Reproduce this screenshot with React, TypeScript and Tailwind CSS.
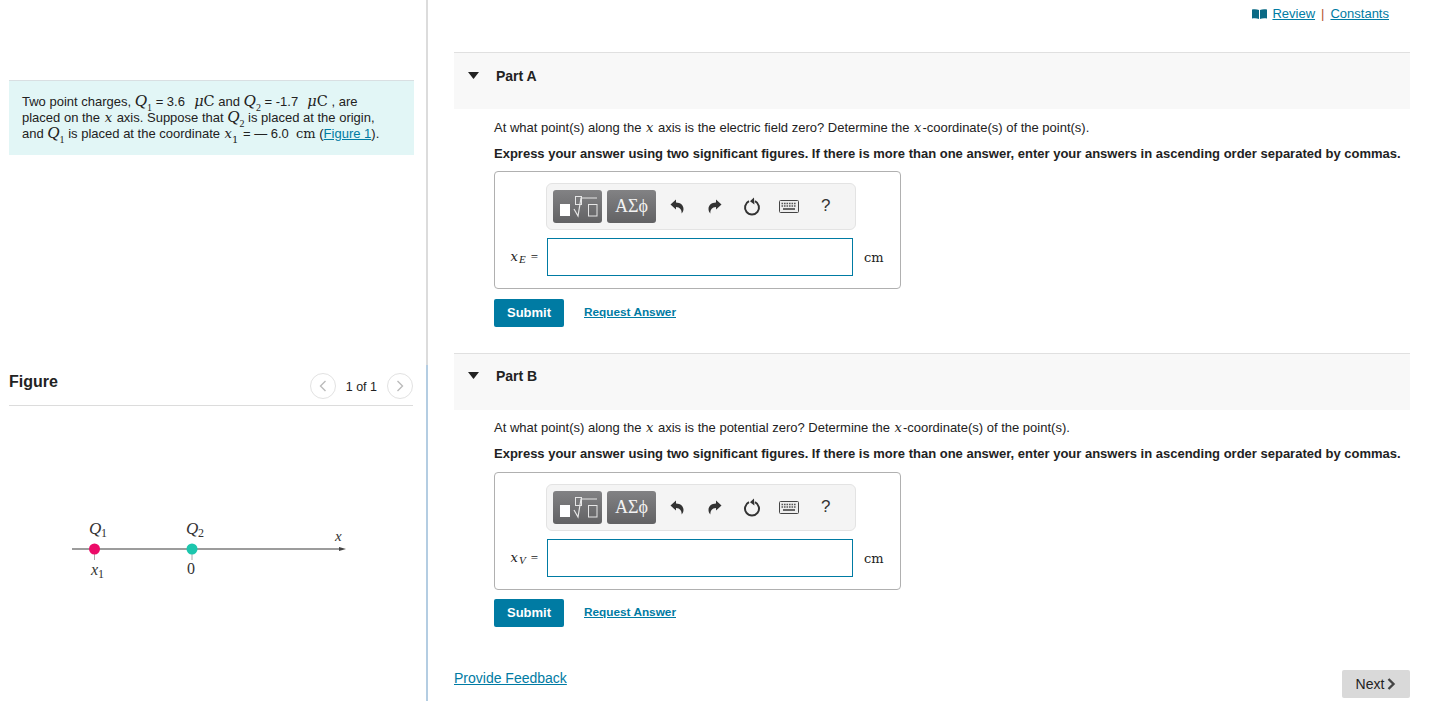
const sans = "font-['Liberation_Sans',Arial,sans-serif]";

function MathVar({ v, sub }: { v: string; sub?: string }) {
  return (
    <span className="font-['Liberation_Serif',serif] text-[17px] italic leading-[0] text-[#222]">
      {v}
      {sub && <sub className="text-[10px] not-italic leading-[0] align-[-2px]">{sub}</sub>}
    </span>
  );
}

function MathX({ sub }: { sub?: string }) {
  return (
    <span className="mx-[1px] font-['DejaVu_Serif',serif] text-[13px] italic leading-[0] text-[#222]">
      x
      {sub && <sub className="text-[10px] not-italic leading-[0] align-[-2px]">{sub}</sub>}
    </span>
  );
}

function Unit({ children }: { children: string }) {
  return <span className="font-['DejaVu_Serif',serif] text-[13px] leading-[0] text-[#222]">{children}</span>;
}

function MicroCoulomb() {
  return (
    <span className="ml-[2px] font-['DejaVu_Serif',serif] text-[14.5px] leading-[0] text-[#222]">
      <i>μ</i>C
    </span>
  );
}

function Undo({ flip }: { flip?: boolean }) {
  return (
    <svg width="14" height="15" viewBox="0 0 14 15" className={flip ? '-scale-x-100' : ''}>
      <path d="M0.5 5.5 L6 0.5 V3.6 C10.5 3.6 13.5 6.4 13.5 10 C13.5 11.8 12.8 13.4 11.6 14.5 C12 11 10 8 6 7.9 V10.6 Z" fill="#333" />
    </svg>
  );
}

function Toolbar() {
  return (
    <div className="ml-[51px] flex h-[47px] w-[310px] items-center rounded-md border border-[#e3e3e3] bg-[#f4f4f4] pb-[1px] pl-[6px]">
      <div className="h-[33px] w-[49px] rounded-[3px] bg-gradient-to-b from-[#828284] to-[#626264]">
        <svg width="49" height="33" viewBox="0 0 49 33">
          <rect x="7" y="14" width="10" height="12" fill="#fff" />
          <rect x="22.5" y="6.5" width="6" height="8" fill="none" stroke="#e6e6e6" />
          <path d="M21 19 L25 26 L28 8 H44" fill="none" stroke="#e6e6e6" strokeWidth="1.2" />
          <rect x="35.5" y="14.5" width="8.5" height="11.5" fill="none" stroke="#e6e6e6" />
        </svg>
      </div>
      <div className="ml-[5px] flex h-[33px] w-[49px] items-center justify-center rounded-[3px] bg-gradient-to-b from-[#828284] to-[#626264] font-['Liberation_Serif',serif] text-[18px] text-[#f2f2f2]">
        ΑΣϕ
      </div>
      <div className="ml-[14px] flex w-[14px] justify-center"><Undo /></div>
      <div className="ml-[24px] flex w-[14px] justify-center"><Undo flip /></div>
      <div className="ml-[21px]">
        <svg width="18" height="19" viewBox="0 0 18 19">
          <path d="M6 4.2 A7 7 0 1 0 12 4.2" fill="none" stroke="#333" strokeWidth="2" />
          <path d="M11 0.5 L7 4.2 L11.4 7.4 Z" fill="#333" />
        </svg>
      </div>
      <div className="ml-[18px]">
        <svg width="20" height="13" viewBox="0 0 20 13">
          <rect x="0.5" y="0.5" width="19" height="12" rx="1" fill="#eee" stroke="#444" />
          <path d="M2.5 3.5 H17.5 M2.5 6 H17.5" stroke="#555" strokeWidth="1.4" strokeDasharray="1.6 0.9" />
          <path d="M4 9 H16" stroke="#444" strokeWidth="1.6" />
        </svg>
      </div>
      <span className={`ml-[22px] text-[17px] text-[#333] ${sans}`}>?</span>
    </div>
  );
}

function AnswerBox({ sub }: { sub: string }) {
  return (
    <div className="h-[118px] w-[407px] rounded-[4px] border border-[#b0b0b0] bg-white pt-[11px]">
      <Toolbar />
      <div className="mt-[8px] flex h-[38px] items-center">
        <div className="flex w-[52px] items-center justify-end pr-[9px] font-['Liberation_Serif',serif] text-[#222]">
          <MathX />
          <sub className="text-[11px] italic leading-none align-[-3px]">{sub}</sub>
          <span className="ml-[5px] text-[13px]">=</span>
        </div>
        <div className="h-[38px] w-[306px] border border-[#007ba3] bg-white" />
        <div className="ml-[11px]"><Unit>cm</Unit></div>
      </div>
    </div>
  );
}

type PartProps = {
  title: string;
  question: string;
  sub: string;
  headerTop: string;
  questionTop: string;
  expressTop: string;
  boxTop: string;
  submitTop: string;
  bodyHeight: string;
};

function PartSection({ title, question, sub, headerTop, questionTop, expressTop, boxTop, submitTop, bodyHeight }: PartProps) {
  return (
    <section>
      <div className={`flex h-[57px] w-[956px] items-start border-t border-[#e0e0e0] bg-[#f8f8f8] pl-[14px] ${headerTop}`}>
        <svg width="11" height="7" viewBox="0 0 11 7" className="mt-[4px]">
          <path d="M0 0 H11 L5.5 7 Z" fill="#222" />
        </svg>
        <h2 className="ml-[17px] text-[14px] font-bold leading-[17px] text-[#222]">{title}</h2>
      </div>
      <div className={`pl-[40px] ${bodyHeight}`}>
        <p className={`text-[13px] leading-[17px] text-[#222] ${questionTop}`}>
          At what point(s) along the <MathX /> axis is the {question} zero? Determine the <MathX />-coordinate(s) of the point(s).
        </p>
        <p className={`text-[13px] font-bold leading-[17px] text-[#222] ${expressTop}`}>
          Express your answer using two significant figures. If there is more than one answer, enter your answers in ascending order separated by commas.
        </p>
        <div className={boxTop}><AnswerBox sub={sub} /></div>
        <div className={`flex items-center ${submitTop}`}>
          <button className="h-[28px] w-[70px] rounded-[2px] bg-[#007ba3] text-[13px] font-bold text-white">Submit</button>
          <a className="ml-[20px] text-[11.8px] font-bold text-[#007ba3] underline">Request Answer</a>
        </div>
      </div>
    </section>
  );
}

function PagerButton({ dir }: { dir: 'left' | 'right' }) {
  return (
    <div className="flex h-[26px] w-[26px] items-center justify-center rounded-full border border-[#e2e2e2] bg-white">
      <svg width="8" height="12" viewBox="0 0 8 12">
        <path d={dir === 'left' ? 'M6.5 1 L1.5 6 L6.5 11' : 'M1.5 1 L6.5 6 L1.5 11'} fill="none" stroke="#bbb" strokeWidth="1.4" />
      </svg>
    </div>
  );
}

function ChargeDiagram() {
  return (
    <svg width="300" height="80" viewBox="0 0 300 80" className="ml-[51px] mt-[104px] block">
      <g fontFamily="'Liberation Serif', serif" fill="#333">
        <text x="29" y="24" fontSize="17" fontStyle="italic">Q</text>
        <text x="41" y="27" fontSize="12">1</text>
        <text x="126" y="24" fontSize="17" fontStyle="italic">Q</text>
        <text x="138" y="27" fontSize="12">2</text>
        <text x="275" y="31" fontSize="15" fontStyle="italic">x</text>
        <text x="31" y="65" fontSize="16" fontStyle="italic">x</text>
        <text x="38" y="68" fontSize="12">1</text>
        <text x="127" y="64" fontSize="16">0</text>
      </g>
      <path d="M12 39 H282" stroke="#7b7b7b" strokeWidth="1.5" />
      <path d="M279 37 L286 39 L279 41 Z" fill="#444" />
      <path d="M34.5 44 V50 M132 44 V50" stroke="#aaa" />
      <circle cx="34.5" cy="39" r="5.5" fill="#ec0b68" />
      <circle cx="132" cy="39" r="5.5" fill="#1cc6ad" />
    </svg>
  );
}

export default function App() {
  return (
    <div className={`flex h-[701px] w-[1435px] overflow-hidden bg-white text-[#222] ${sans}`}>
      <aside className="flex h-full w-[428px] shrink-0 flex-col">
        <div className="h-[365px] border-r-2 border-[#dcdcdc] pl-[9px] pr-[12px] pt-[80px]">
          <div className="h-[75px] border-t border-[#d9dfe2] bg-[#e2f6f6] pl-[13px] pt-[13px] text-[13px] leading-[16px] text-[#222]">
            Two point charges, <MathVar v="Q" sub="1" /> = 3.6 &nbsp;<MicroCoulomb /> and <MathVar v="Q" sub="2" /> = -1.7 &nbsp;<MicroCoulomb /> , are
            <br />
            placed on the <MathX /> axis. Suppose that <MathVar v="Q" sub="2" /> is placed at the origin,
            <br />
            and <MathVar v="Q" sub="1" /> is placed at the coordinate <MathX sub="1" /> = — 6.0 &nbsp;<Unit>cm</Unit> (<a className="text-[#007ba3] underline">Figure 1</a>).
          </div>
        </div>
        <div className="flex-1 border-r-2 border-[#b4cde2] pl-[9px] pr-[13px]">
          <div className="flex h-[41px] items-start justify-between border-b border-[#dcdcdc]">
            <h2 className="pt-[7px] text-[16px] font-bold leading-[20px] text-[#222]">Figure</h2>
            <div className="mt-[8px] flex items-center">
              <PagerButton dir="left" />
              <span className="mx-[10px] pt-[3px] text-[12.5px]">1 of 1</span>
              <PagerButton dir="right" />
            </div>
          </div>
          <ChargeDiagram />
        </div>
      </aside>

      <main className="ml-[26px] flex w-[956px] flex-col">
        <div className="flex h-[52px] items-start justify-end pr-[21px] pt-[5px] text-[13px] leading-[17px]">
          <a className="flex items-center text-[#007ba3]">
            <svg width="15" height="10" viewBox="0 0 15 10" className="mr-[2px]">
              <path d="M0 0.5 C2 0 5 0 7 1 V10 C5 9 2 9 0 9.5 Z M8 1 C10 0 13 0 15 0.5 V9.5 C13 9 10 9 8 10 Z" fill="#0a6a85" />
            </svg>
            <span className="pl-[3px] underline">Review</span>
          </a>
          <span className="mx-[6px] text-[#b5562c]">|</span>
          <a className="text-[#007ba3] underline">Constants</a>
        </div>
        <PartSection title="Part A" question="electric field" sub="E" headerTop="pt-[15px]" questionTop="pt-[10px]" expressTop="mt-[9px]" boxTop="mt-[9px]" submitTop="mt-[10px]" bodyHeight="h-[244px]" />
        <PartSection title="Part B" question="potential" sub="V" headerTop="pt-[14px]" questionTop="pt-[9px]" expressTop="mt-[9px]" boxTop="mt-[10px]" submitTop="mt-[9px]" bodyHeight="h-[260px]" />
        <div className="flex flex-1 items-start justify-between">
          <a className="-mt-[2px] text-[14px] leading-[20px] text-[#007ba3] underline">Provide Feedback</a>
          <button className="flex h-[28px] w-[68px] items-center justify-center gap-[3px] rounded-[2px] bg-[#d9d9d9] text-[14px] text-[#222]">
            Next
            <svg width="9" height="12" viewBox="0 0 9 12">
              <path d="M1.5 1 L6.5 6 L1.5 11" fill="none" stroke="#444" strokeWidth="2.4" />
            </svg>
          </button>
        </div>
      </main>
    </div>
  );
}
